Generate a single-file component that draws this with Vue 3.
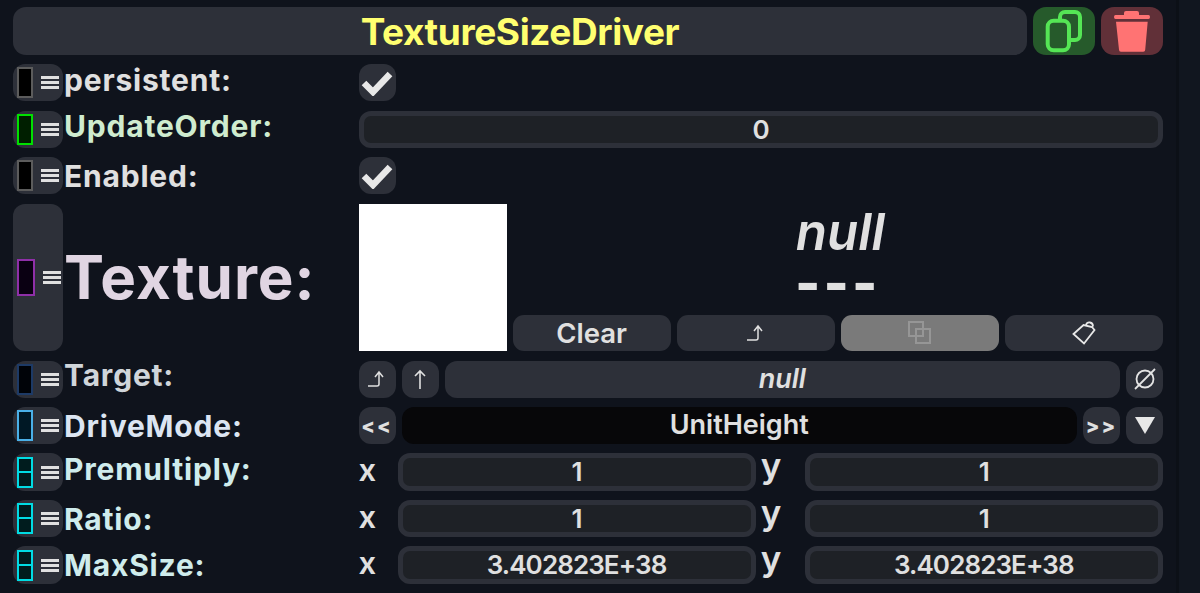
<script setup>
const vecs = [
  { label: 'Premultiply:', x: '1', y: '1', lift: 'lift3' },
  { label: 'Ratio:', x: '1', y: '1', lift: '' },
  { label: 'MaxSize:', x: '3.402823E+38', y: '3.402823E+38', lift: '' },
]
</script>

<template>
  <div class="page">
    <div class="main">
      <div class="panel">
        <div class="head">
          <div class="title">TextureSizeDriver</div>
          <button class="act copy">
            <svg width="40" height="46" viewBox="0 0 40 46" fill="none" stroke="#55e655" stroke-width="4">
              <path d="M16 12V9a5 5 0 0 1 5-5h10a5 5 0 0 1 5 5v18a5 5 0 0 1-5 5h-6" />
              <rect x="3.700" y="12.700" width="21.300" height="29.600" rx="6" />
            </svg>
          </button>
          <button class="act trash">
            <svg width="36" height="44" viewBox="0 0 36 44" fill="#ff7373">
              <path d="M10 4q0-2 2-2h11q2 0 2 2v2h9.500q1.500 0 1.500 2t-1.500 2H1.500Q0 10 0 8t1.500-2H10z" />
              <path d="M2 12.700h31.700l-2.500 28q0 2-2 2H7q-2 0-2-2z" />
            </svg>
          </button>
        </div>

        <div class="row">
          <div class="ref"><span class="swatch gray"></span><span class="burger"><i></i><i></i><i></i></span></div>
          <div class="label c-gray lift3">persistent:</div>
          <div class="field"><button class="sq check"><svg width="32" height="26" viewBox="0 0 32 26" fill="none" stroke="#e8e8e8" stroke-width="6.500"><path d="M3 13l9 9L29 4" /></svg></button></div>
        </div>

        <div class="row">
          <div class="ref"><span class="swatch green"></span><span class="burger"><i></i><i></i><i></i></span></div>
          <div class="label c-green lift3">UpdateOrder:</div>
          <div class="field"><div class="num">0</div></div>
        </div>

        <div class="row">
          <div class="ref"><span class="swatch gray"></span><span class="burger"><i></i><i></i><i></i></span></div>
          <div class="label c-gray">Enabled:</div>
          <div class="field"><button class="sq check"><svg width="32" height="26" viewBox="0 0 32 26" fill="none" stroke="#e8e8e8" stroke-width="6.500"><path d="M3 13l9 9L29 4" /></svg></button></div>
        </div>

        <div class="row tall">
          <div class="ref"><span class="swatch purple"></span><span class="burger"><i></i><i></i><i></i></span></div>
          <div class="label big">Texture:</div>
          <div class="asset">
            <div class="preview"></div>
            <div class="asset-body">
              <div class="asset-name">null</div>
              <div class="asset-dash">---</div>
              <div class="asset-btns">
                <button class="btn">Clear</button>
                <button class="btn"><svg width="20" height="18" viewBox="0 0 20 18" fill="none" stroke="#e0e0e0" stroke-width="1.500"><path d="M1 16h9q2 0 2-2V3M8 7l4-5 4 5" /></svg></button>
                <button class="btn off"><svg width="24" height="24" viewBox="0 0 24 24" fill="none" stroke="#969696" stroke-width="2"><rect x="1" y="1" width="14" height="14" /><rect x="8" y="8" width="14" height="14" /></svg></button>
                <button class="btn"><svg width="24" height="24" viewBox="0 0 24 24" fill="none" stroke="#e8e8e8" stroke-width="1.800"><path d="M1.500 13L11.500 4 20 6l2.500 3L12 22.500zM14 4q1-3 4-2.500t3 4" /></svg></button>
              </div>
            </div>
          </div>
        </div>

        <div class="row">
          <div class="ref"><span class="swatch navy"></span><span class="burger"><i></i><i></i><i></i></span></div>
          <div class="label c-target lift4">Target:</div>
          <div class="field">
            <button class="sq"><svg width="20" height="18" viewBox="0 0 20 18" fill="none" stroke="#e0e0e0" stroke-width="1.500"><path d="M1 16h9q2 0 2-2V3M8 7l4-5 4 5" /></svg></button>
            <button class="sq"><svg width="12" height="20" viewBox="0 0 12 20" fill="none" stroke="#e0e0e0" stroke-width="1.600"><path d="M6 20V2M1 7l5-5 5 5" /></svg></button>
            <div class="pill null">null</div>
            <button class="sq"><svg width="24" height="24" viewBox="0 0 24 24" fill="none" stroke="#e4e4e4" stroke-width="1.800"><circle cx="12" cy="12" r="8.500" /><path d="M2 22L22 2" /></svg></button>
          </div>
        </div>

        <div class="row">
          <div class="ref"><span class="swatch blue"></span><span class="burger"><i></i><i></i><i></i></span></div>
          <div class="label c-blue">DriveMode:</div>
          <div class="field">
            <button class="sq arrows">&lt;&lt;</button>
            <div class="pill dark">UnitHeight</div>
            <button class="sq arrows">&gt;&gt;</button>
            <button class="sq"><svg width="20" height="17" viewBox="0 0 20 17" fill="#e8e8e8"><path d="M0 0h20L10 17z" /></svg></button>
          </div>
        </div>

        <div v-for="v in vecs" :key="v.label" class="row">
          <div class="ref"><span class="swatch cyan"></span><span class="burger"><i></i><i></i><i></i></span></div>
          <div class="label c-cyan" :class="v.lift">{{ v.label }}</div>
          <div class="field vec">
            <span class="axis x">x</span>
            <div class="num">{{ v.x }}</div>
            <span class="axis y">y</span>
            <div class="num">{{ v.y }}</div>
          </div>
        </div>
      </div>
    </div>
    <div class="rule"></div>
    <div class="side"></div>
  </div>
</template>

<style>
html, body { margin: 0; background: #11151e; overflow: hidden; }
</style>

<style scoped>
.page {
  width: 1200px;
  height: 593px;
  overflow: hidden;
  display: flex;
  background: #0f131c;
  font-family: "Inter", "Open Sans", sans-serif;
  font-weight: 600;
  color: #e0e0e0;
}
.main { width: 1176px; flex: none; }
.rule { width: 3px; flex: none; background: #0c1017; }
.side { flex: 1; background: #11161f; }
.panel {
  width: 1150px;
  margin-left: 13px;
  padding-top: 7px;
  display: flex;
  flex-direction: column;
  gap: 9.200px;
}
button {
  border: none;
  padding: 0;
  font: inherit;
  display: flex;
  align-items: center;
  justify-content: center;
  color: inherit;
}
.head { display: flex; gap: 6px; height: 48px; }
.title {
  flex: 1;
  background: #2d3039;
  border-radius: 13px;
  color: #ffff70;
  font-size: 37px;
  font-weight: 700;
  letter-spacing: -0.400px;
  text-align: center;
  line-height: 50px;
}
.act { width: 62px; border-radius: 13px; }
.copy { background: #265a2b; }
.trash { background: #613038; }
.row { display: flex; height: 37.300px; align-items: stretch; }
.row.tall { height: 147.700px; }
.ref {
  width: 50px;
  flex: none;
  background: #2d3039;
  border-radius: 12px;
  display: flex;
  align-items: center;
  padding-left: 4px;
  box-sizing: border-box;
  gap: 8px;
}
.swatch {
  width: 12px;
  height: 27px;
  flex: none;
  background: #000;
  border: 2px solid #5c5c5c;
  position: relative;
}
.swatch.green { border-color: #00e000; background: #001f00; }
.swatch.purple { border-color: #8f2fa8; background: #0a0012; width: 14px; height: 33px; }
.swatch.navy { border-color: #1d3a66; background: #000308; }
.swatch.blue { border-color: #4ab0e8; background: #001825; }
.swatch.cyan { border-color: #00dce4; background: #001c1e; }
.swatch.cyan::after {
  content: "";
  position: absolute;
  left: 0;
  right: 0;
  top: 12px;
  height: 2px;
  background: #00dce4;
}
.burger { width: 18px; display: flex; flex-direction: column; gap: 2px; flex: none; }
.burger i { display: block; height: 3px; background: #e0e0e0; }
.label {
  width: 295.500px;
  flex: none;
  font-size: 30px;
  font-weight: 650;
  line-height: 32px;
  letter-spacing: 0.800px;
  padding-left: 1px;
  box-sizing: border-box;
  white-space: nowrap;
  display: flex;
  align-items: center;
}
.label.lift3 { padding-bottom: 6px; }
.label.lift4 { padding-bottom: 8px; }
.label.big { font-size: 60px; color: #e0d5e2; letter-spacing: 1px; font-weight: 700; }
.c-gray { color: #e0e0e0; }
.c-green { color: #cfeccf; }
.c-target { color: #d0d5da; }
.c-blue { color: #dce5f2; }
.c-cyan { color: #cfecec; }
.field { flex: 1; display: flex; gap: 6px; align-items: stretch; }
.sq {
  width: 37px;
  flex: none;
  background: #2d3039;
  border-radius: 12px;
  font-size: 28px;
}
.sq.arrows { font-size: 20px; font-weight: 800; letter-spacing: 2px; }
.num {
  flex: 1;
  min-width: 0;
  background: #1e2126;
  border: 5px solid #2d3039;
  border-radius: 12px;
  box-sizing: border-box;
  text-align: center;
  font-size: 26px;
  letter-spacing: -0.900px;
  line-height: 27px;
  color: #e0e0e0;
}
.pill {
  flex: 1;
  border-radius: 12px;
  text-align: center;
  font-size: 27px;
  line-height: 35px;
}
.pill.null { background: #2d3039; font-style: italic; }
.pill.dark { background: #070709; }
.axis { font-size: 31px; line-height: 34px; flex: none; box-sizing: border-box; }
.axis.x { width: 39px; }
.axis.y { width: 49px; font-size: 35px; padding-left: 5px; margin-top: -5px; }
.vec { gap: 0; }
.asset { flex: 1; display: flex; gap: 6px; }
.preview { width: 148px; height: 100%; background: #fff; flex: none; }
.asset-body { flex: 1; display: flex; flex-direction: column; min-width: 0; }
.asset-name {
  font-size: 51px;
  font-style: italic;
  text-align: center;
  line-height: 56px;
  padding-left: 5px;
  color: #e0e0e0;
}
.asset-dash {
  font-size: 54px;
  font-weight: 800;
  text-align: center;
  line-height: 46px;
  letter-spacing: 3px;
  height: 46px;
  color: #e0e0e0;
}
.asset-btns { display: flex; gap: 6px; margin-top: auto; height: 36px; }
.btn {
  flex: 1;
  background: #2d3039;
  border-radius: 11px;
  font-size: 27.500px;
  color: #e0e0e0;
}
.btn.off { background: #7a7a7a; }
</style>
